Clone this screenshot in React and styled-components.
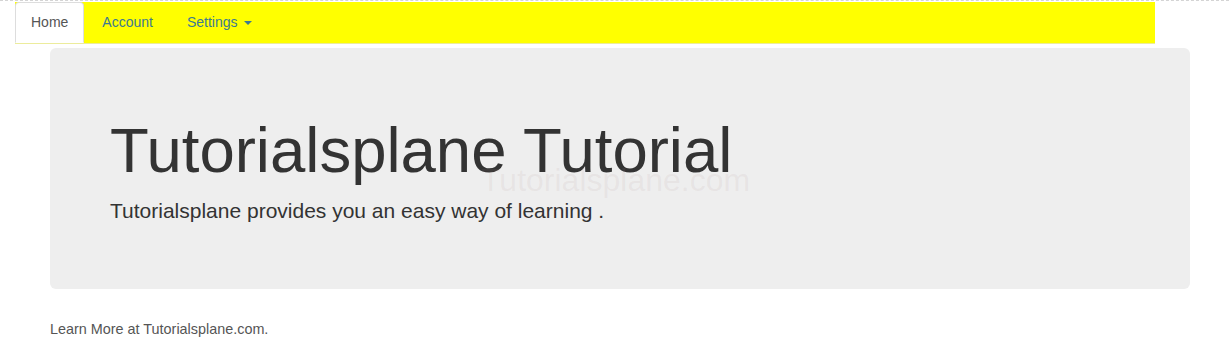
import React from "react";
import styled, { createGlobalStyle } from "styled-components";

const Global = createGlobalStyle`
  html, body { margin: 0; padding: 0; background: #fff; }
  body {
    font-family: "Liberation Sans", Arial, Helvetica, sans-serif;
    font-size: 14px;
    line-height: 1.42857;
    color: #333;
  }
  * { box-sizing: border-box; }
`;

const Page = styled.div`
  position: relative;
  border-top: 1px dashed #d4d4d4;
  min-height: 356px;
`;

const Tabs = styled.ul`
  display: flex;
  list-style: none;
  margin: 1px 74px 0 15px;
  padding: 0;
  background: #ffff00;
  border-bottom: 1px solid #ecec9c;
  height: 42px;
`;

const Tab = styled.li`
  margin-bottom: -1px;
  margin-right: 2px;
`;

const TabLink = styled.a`
  display: flex;
  align-items: center;
  gap: 4px;
  height: 41px;
  padding: 0 15px;
  text-decoration: none;
  font-size: 14px;
  border: 1px solid ${(p) => (p.$active ? "#ddd" : "transparent")};
  border-bottom-color: transparent;
  border-radius: 4px 4px 0 0;
  background: ${(p) => (p.$active ? "#fff" : "transparent")};
  color: ${(p) => (p.$active ? "#555" : "#3d7a92")};
`;

const Caret = styled.span`
  display: inline-block;
  width: 0;
  height: 0;
  margin-left: 2px;
  border-top: 4px solid currentColor;
  border-left: 4px solid transparent;
  border-right: 4px solid transparent;
`;

const Container = styled.div`
  padding: 4px 39px 0 50px;
`;

const Jumbotron = styled.div`
  position: relative;
  background: #eeeeee;
  border-radius: 6px;
  padding: 48px 60px;
  margin-bottom: 30px;
`;

const Title = styled.h1`
  margin: 20px 0 10px;
  font-size: 63.5px;
  font-weight: 400;
  line-height: 1.1;
  color: #333;
`;

const Lead = styled.p`
  margin: 0 0 15px;
  font-size: 21px;
  line-height: 30px;
  font-weight: 400;
`;

const Watermark = styled.div`
  position: absolute;
  left: 431px;
  top: 110px;
  font-size: 32px;
  color: rgba(170, 140, 140, 0.1);
  pointer-events: none;
`;

const Footer = styled.p`
  margin: 0;
  font-size: 14.4px;
  line-height: 20px;
  color: #555;
`;

export default function App() {
  return (
    <>
      <Global />
      <Page>
        <Tabs>
          <Tab>
            <TabLink $active href="#">Home</TabLink>
          </Tab>
          <Tab>
            <TabLink href="#">Account</TabLink>
          </Tab>
          <Tab>
            <TabLink href="#">
              Settings <Caret />
            </TabLink>
          </Tab>
        </Tabs>
        <Container>
          <Jumbotron>
            <Title>Tutorialsplane Tutorial</Title>
            <Lead>Tutorialsplane provides you an easy way of learning .</Lead>
            <Watermark>Tutorialsplane.com</Watermark>
          </Jumbotron>
          <Footer>Learn More at Tutorialsplane.com.</Footer>
        </Container>
      </Page>
    </>
  );
}
